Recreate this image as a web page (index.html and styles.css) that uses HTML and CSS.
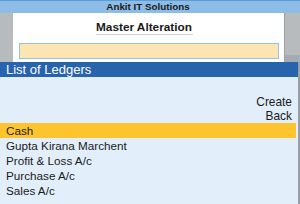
FILE: index.html
```html
<!DOCTYPE html>
<html>
<head>
<meta charset="utf-8">
<link rel="stylesheet" href="styles.css">
</head>
<body>
<div class="app">
  <div class="titlebar">Ankit IT Solutions</div>
  <div class="stage">
    <div class="panel">
      <div class="heading"><span class="heading-text">Master Alteration</span></div>
      <div class="input"></div>
    </div>
    <div class="filler"></div>
  </div>
  <div class="list">
    <div class="list-head">List of Ledgers</div>
    <div class="actions">
      <div class="action">Create</div>
      <div class="action">Back</div>
    </div>
    <div class="rows">
      <div class="row selected">Cash</div>
      <div class="row">Gupta Kirana Marchent</div>
      <div class="row">Profit &amp; Loss A/c</div>
      <div class="row">Purchase A/c</div>
      <div class="row">Sales A/c</div>
    </div>
  </div>
</div>
</body>
</html>
```

FILE: styles.css
```css
html, body {
  margin: 0;
  padding: 0;
}
body {
  width: 300px;
  height: 204px;
  overflow: hidden;
  font-family: "Liberation Sans", Arial, sans-serif;
  background: #e2effa;
}
.app {
  display: flex;
  flex-direction: column;
  width: 300px;
  height: 204px;
}
.titlebar {
  height: 12px;
  border-top: 1px solid #5d9dd6;
  background: #8dbde6;
  color: #1a1a1a;
  font-weight: bold;
  font-size: 9.8px;
  line-height: 11px;
  text-align: center;
  padding-right: 4px;
}
.stage {
  display: flex;
  height: 49px;
  background: #b8bbbe;
  padding-left: 13px;
}
.panel {
  width: 271px;
  background: #ffffff;
  border-right: 1px solid #9ea2a6;
  display: flex;
  flex-direction: column;
}
.filler {
  flex: 1;
  background: linear-gradient(to bottom, #b8bbbe 42px, #a4abb3 42px);
}
.heading {
  padding-top: 7px;
  margin-left: 83px;
  width: 97px;
  border-bottom: 1px solid #d4d4d4;
}
.heading-text {
  display: block;
  font-weight: bold;
  font-size: 11.8px;
  line-height: 14px;
  color: #1a1a1a;
}
.input {
  margin-top: 8px;
  margin-left: 6px;
  width: 258px;
  height: 14px;
  border: 1px solid #8ec6e2;
  background: #fde5b3;
}
.list {
  flex: 1;
  width: 298px;
  border-right: 2px solid #9a9fa5;
  background: #e2effa;
  display: flex;
  flex-direction: column;
}
.list-head {
  height: 15px;
  background: #2863ae;
  color: #ffffff;
  font-size: 13px;
  line-height: 15px;
  padding-left: 6px;
}
.actions {
  padding-top: 18px;
  padding-right: 6px;
  text-align: right;
}
.action {
  font-size: 11.9px;
  line-height: 14px;
  color: #1b1b1b;
}
.rows {
  padding-right: 2px;
}
.row {
  height: 15px;
  font-size: 11.7px;
  line-height: 15px;
  padding-left: 6px;
  color: #1b1b1b;
}
.row.selected {
  background: #fec42e;
}
```
